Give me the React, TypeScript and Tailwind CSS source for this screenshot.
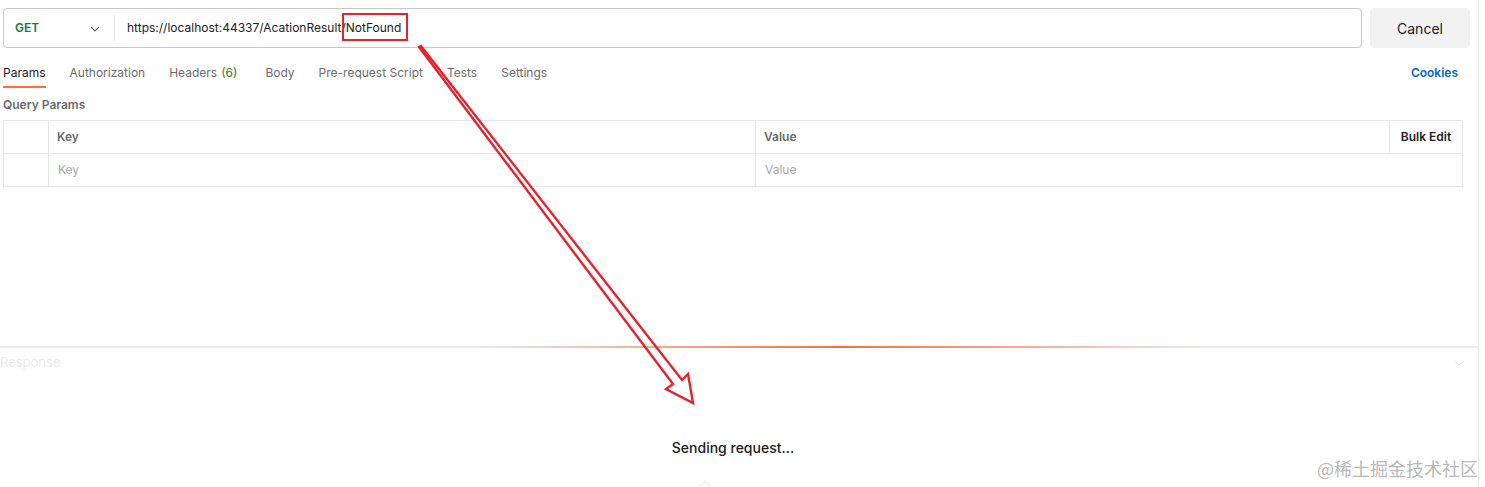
import React from "react";

const font = { fontFamily: "Inter, 'Noto Sans', 'Liberation Sans', sans-serif" };

export default function App() {
  const tabs = [
    { label: "Params", active: true },
    { label: "Authorization" },
    { label: "Headers", badge: "(6)" },
    { label: "Body", extra: true },
    { label: "Pre-request Script" },
    { label: "Tests" },
    { label: "Settings" },
  ];
  return (
    <div className="relative w-[1485px] h-[487px] overflow-hidden bg-white" style={font}>
      <div className="w-[1479px] h-[487px] overflow-hidden border-r border-[#ececec] flex flex-col">
        {/* URL bar */}
        <div className="shrink-0 flex items-start pt-2 pl-[3px] pr-[8px] gap-[8px]">
          <div className="flex-1 h-[40px] border border-[#c7c7c7] rounded-[4px] flex items-center">
            <div className="w-[110px] flex items-center justify-between pl-[11px] pr-[14px]">
              <span className="text-[12px] font-semibold text-[#0f7b3c]">GET</span>
              <svg width="10" height="6" viewBox="0 0 10 6" className="mt-[1px]">
                <path d="M1 1l4 4 4-4" fill="none" stroke="#6b6b6b" strokeWidth="1.1" />
              </svg>
            </div>
            <div className="w-px h-[26px] bg-[#e6e6e6]" />
            <span className="ml-[12px] text-[12px] text-[#212121]">
              https://localhost:44337/AcationResult/NotFound
            </span>
          </div>
          <button className="w-[100px] h-[40px] rounded-[4px] bg-[#f2f2f2] text-[14px] text-[#212121]">
            Cancel
          </button>
        </div>

        {/* Tabs */}
        <div className="shrink-0 flex items-end h-[40px] pl-[3px] pr-[20px]">
          <div className="flex gap-[24px] h-[32px]">
            {tabs.map((t) => (
              <div
                key={t.label}
                className={`flex items-center h-[32px] pt-[3px] text-[12px] border-b-2 ${
                  t.active ? "border-[#ff6c37] text-[#212121]" : "border-transparent text-[#6b6b6b]"
                } ${t.extra ? "ml-[4px]" : ""}`}
              >
                {t.label}
                {t.badge && <span className="ml-[4px] text-[#3f7a2a]">{t.badge}</span>}
              </div>
            ))}
          </div>
          <div className="flex-1" />
          <div className="h-[32px] pt-[2px] flex items-center text-[12px] font-semibold text-[#0265d2]">Cookies</div>
        </div>

        {/* Query Params */}
        <div className="shrink-0 h-[32px] pt-[2px] flex items-center pl-[3px] text-[12px] font-semibold text-[#6b6b6b]">
          Query Params
        </div>

        {/* Table */}
        <div className="shrink-0 ml-[3px] w-[1460px] border border-[#e6e6e6] text-[12px]">
          <div className="flex h-[33px] border-b border-[#e6e6e6]">
            <div className="w-[45px] border-r border-[#e6e6e6]" />
            <div className="w-[707px] border-r border-[#e6e6e6] flex items-center pl-[8px] font-semibold text-[#6b6b6b]">
              Key
            </div>
            <div className="flex-1 border-r border-[#e6e6e6] flex items-center pl-[8px] font-semibold text-[#6b6b6b]">
              Value
            </div>
            <div className="w-[72px] flex items-center justify-center font-semibold text-[#212121]">Bulk Edit</div>
          </div>
          <div className="flex h-[32px]">
            <div className="w-[45px] border-r border-[#e6e6e6]" />
            <div className="w-[707px] border-r border-[#e6e6e6] flex items-center pl-[9px] text-[#a6a6a6]">Key</div>
            <div className="flex-1 flex items-center pl-[9px] text-[#a6a6a6]">Value</div>
          </div>
        </div>

        <div className="shrink-0 h-[159px]" />

        {/* Divider with loading bar */}
        <div className="shrink-0 relative h-[2px] bg-[#ececec]">
          <div className="absolute left-[470px] top-0 w-[740px] h-[2px] bg-gradient-to-r from-transparent via-[#ff6c37] to-transparent" />
        </div>

        {/* Response header */}
        <div className="shrink-0 flex items-center justify-between h-[30px] pr-[14px]">
          <span className="text-[13px] text-[#ececec]">Response</span>
          <svg width="10" height="6" viewBox="0 0 10 6">
            <path d="M1 1l4 4 4-4" fill="none" stroke="#e2e2e2" strokeWidth="1" />
          </svg>
        </div>

        <div className="shrink-0 flex flex-col items-center pt-[60px] pr-[12px]">
          <span className="text-[14px] leading-[20px] font-medium text-[#212121]">Sending request...</span>
          <svg width="20" height="10" viewBox="0 0 20 10" className="mt-[20px] ml-[-56px]">
            <path d="M4 9l6-6 6 6" fill="none" stroke="#f0f0f0" strokeWidth="1.5" />
          </svg>
        </div>
      </div>

      {/* Annotations */}
      <svg className="absolute left-0 top-0 pointer-events-none" width="1485" height="487">
        <rect x="343" y="14" width="64" height="26" fill="none" stroke="#e8222a" strokeWidth="2" />
        <polygon
          points="419,47 673,384 666,389 693,403 688,374 682,380 421,46"
          fill="none"
          stroke="#e8222a"
          strokeWidth="2.4"
          strokeLinejoin="miter"
        />
      </svg>

      <div
        className="absolute right-[7px] bottom-[5px] text-[18px] text-[#b8b8b8]"
        style={{ fontFamily: "'Noto Sans CJK SC', 'Noto Sans', sans-serif" }}
      >
        @稀土掘金技术社区
      </div>
    </div>
  );
}
